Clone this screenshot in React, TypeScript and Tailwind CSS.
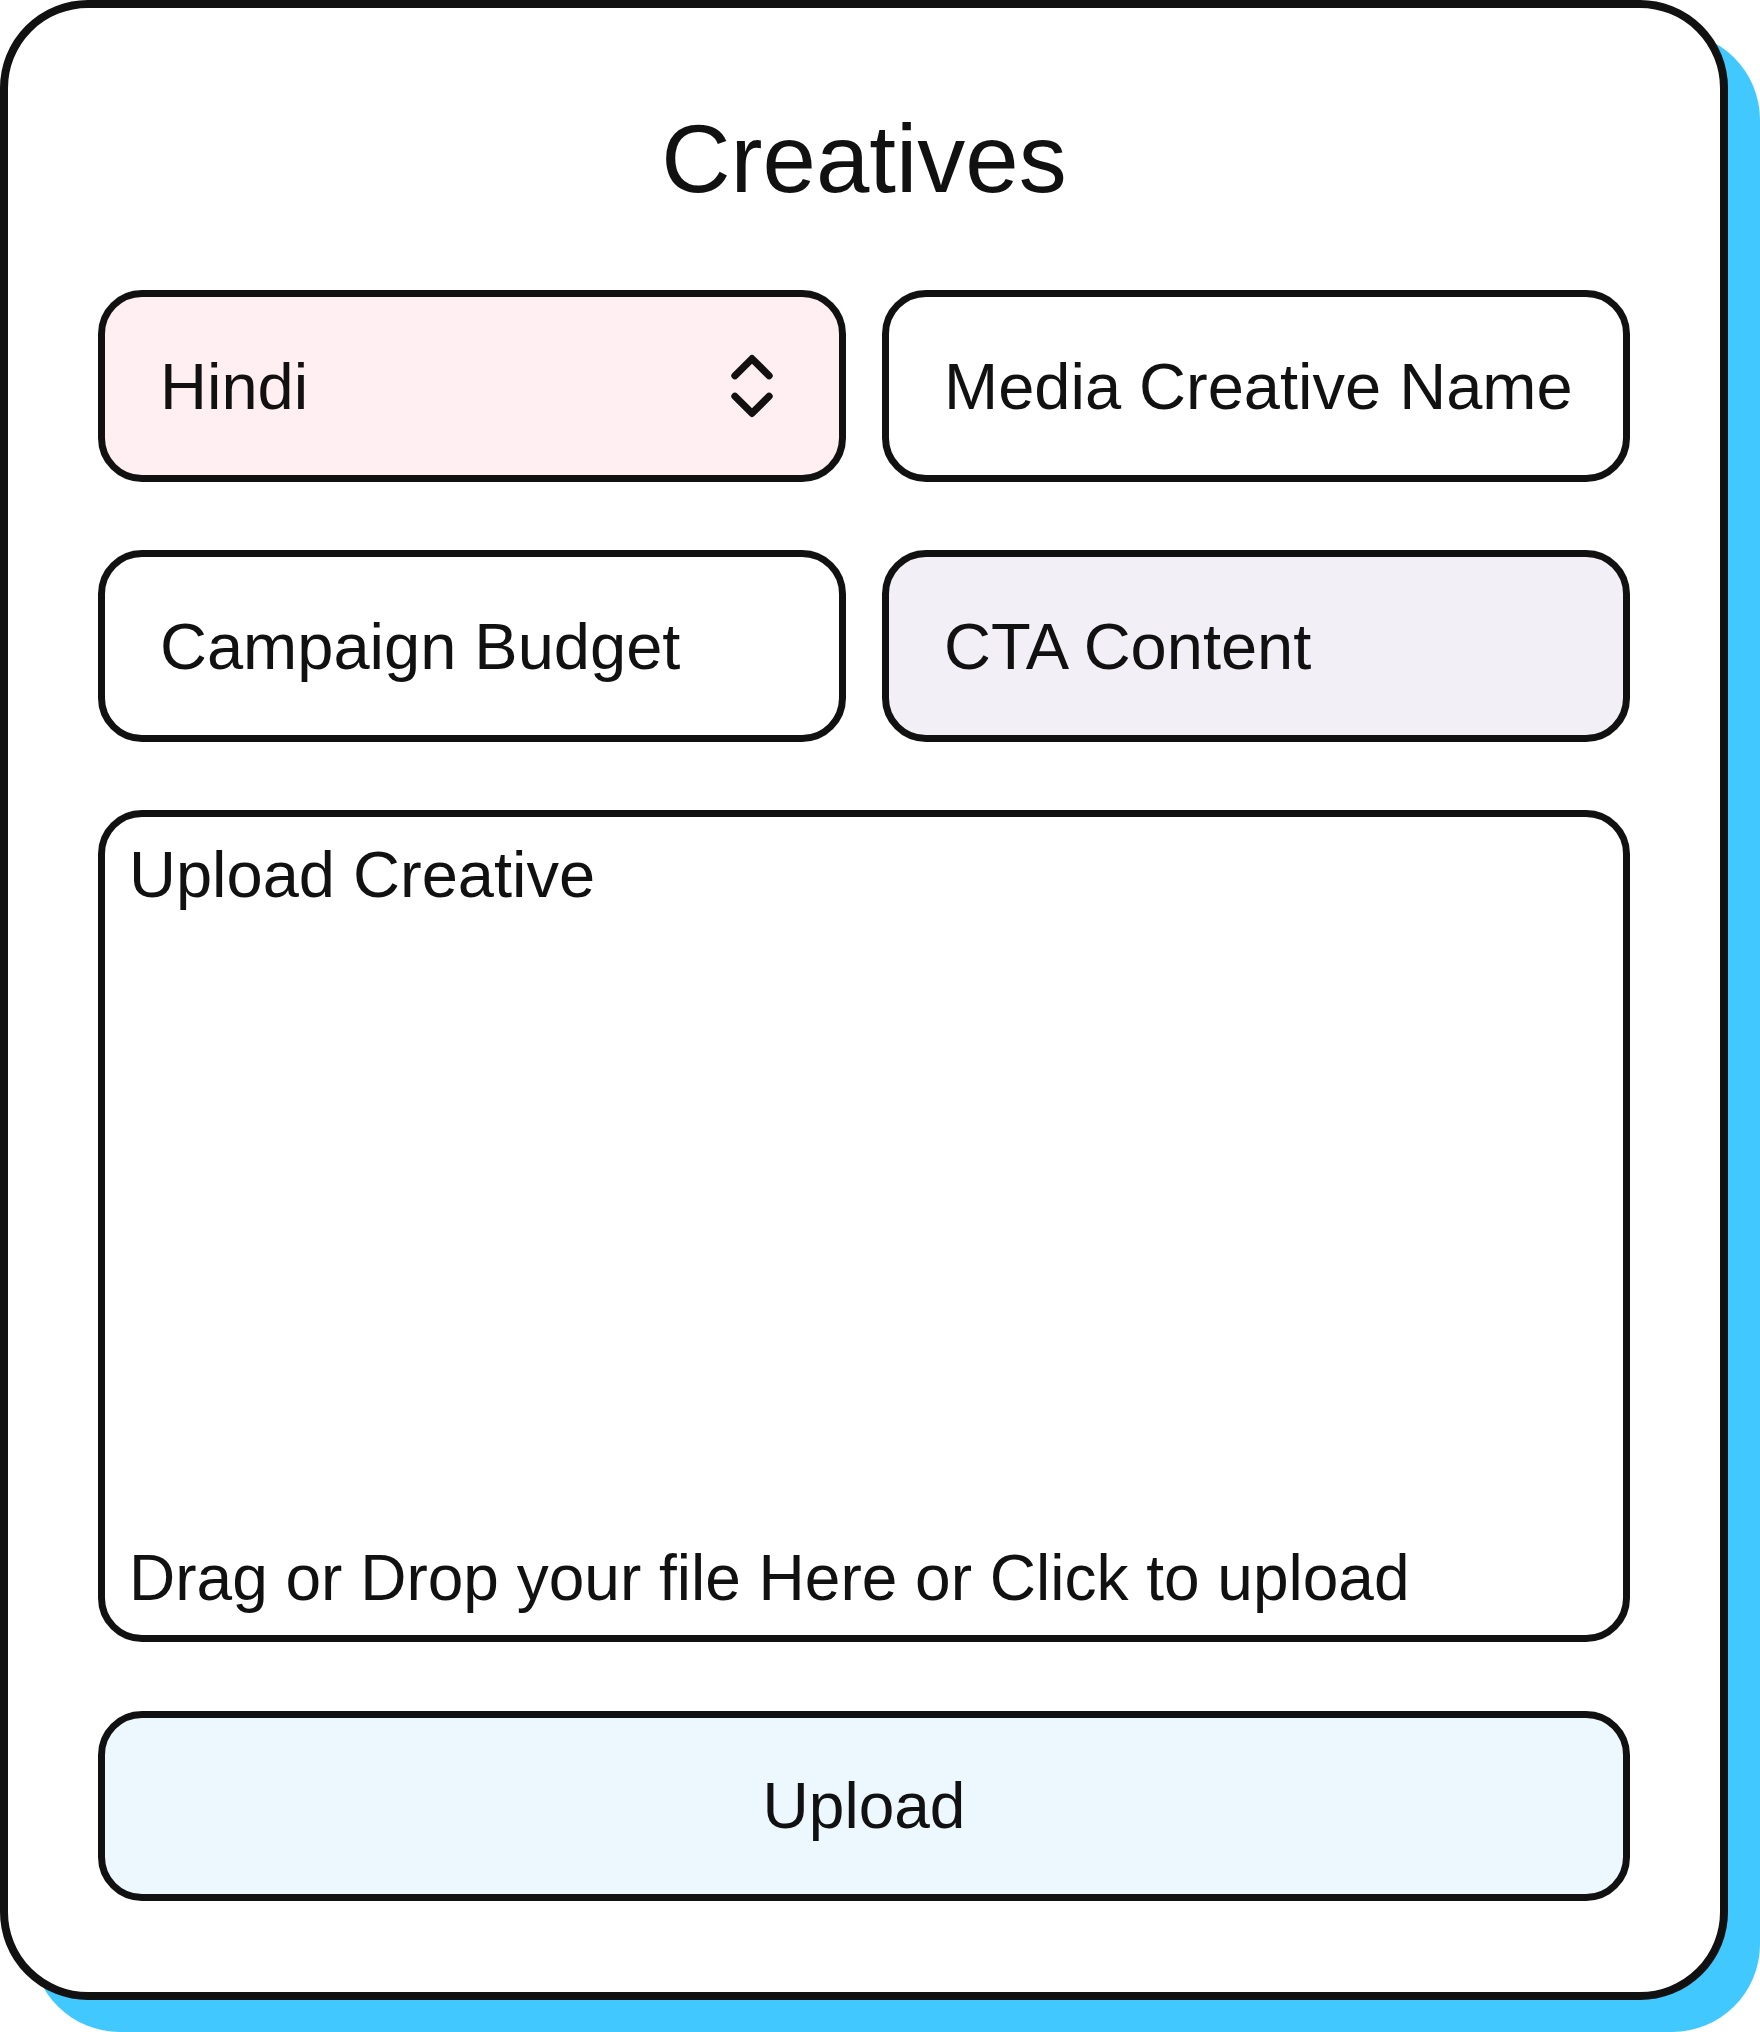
import React from "react";
import { ChevronsUpDown } from "lucide-react";

function Field({ label, bg, icon }: { label: string; bg: string; icon?: boolean }) {
  return (
    <div
      className={`flex h-[192px] items-center justify-between rounded-[44px] border-[7px] border-[#111111] pl-[55px] pr-[46px] ${bg}`}
    >
      <span className="text-[65px] leading-none text-[#111111]">{label}</span>
      {icon && <ChevronsUpDown size={82} strokeWidth={2.1} color="#111111" />}
    </div>
  );
}

export default function App() {
  return (
    <div className="h-[2032px] w-[1760px] bg-white font-['Liberation_Sans',Arial,sans-serif]">
      <div className="flex h-[2000px] w-[1728px] flex-col rounded-[88px] border-[8px] border-[#111111] bg-white px-[90px] pt-[97px] pb-[91px] shadow-[32px_32px_0_0_#40C8FF]">
        {/* ── Title ─────────────────────────────────────────────── */}
        <h1 className="text-center text-[96px] leading-[108px] text-[#111111]">Creatives</h1>

        {/* ── Fields ────────────────────────────────────────────── */}
        <div className="mt-[77px] grid grid-cols-2 gap-x-[36px] gap-y-[68px]">
          <Field label="Hindi" bg="bg-[#FFEEF2]" icon />
          <Field label="Media Creative Name" bg="bg-white" />
          <Field label="Campaign Budget" bg="bg-white" />
          <Field label="CTA Content" bg="bg-[#F3EFF6]" />
        </div>

        {/* ── Upload area ───────────────────────────────────────── */}
        <div className="mt-[68px] flex h-[832px] flex-col justify-between rounded-[44px] border-[7px] border-[#111111] px-[24px] pt-[9px] pb-[9px] text-[#111111]">
          <span className="text-[65px]">Upload Creative</span>
          <span className="text-[64px]">Drag or Drop your file Here or Click to upload</span>
        </div>

        {/* ── Button ────────────────────────────────────────────── */}
        <button className="mt-[69px] flex h-[190px] items-center justify-center rounded-[44px] border-[7px] border-[#111111] bg-[#ECF8FE] text-[64px] text-[#111111]">
          Upload
        </button>
      </div>
    </div>
  );
}
